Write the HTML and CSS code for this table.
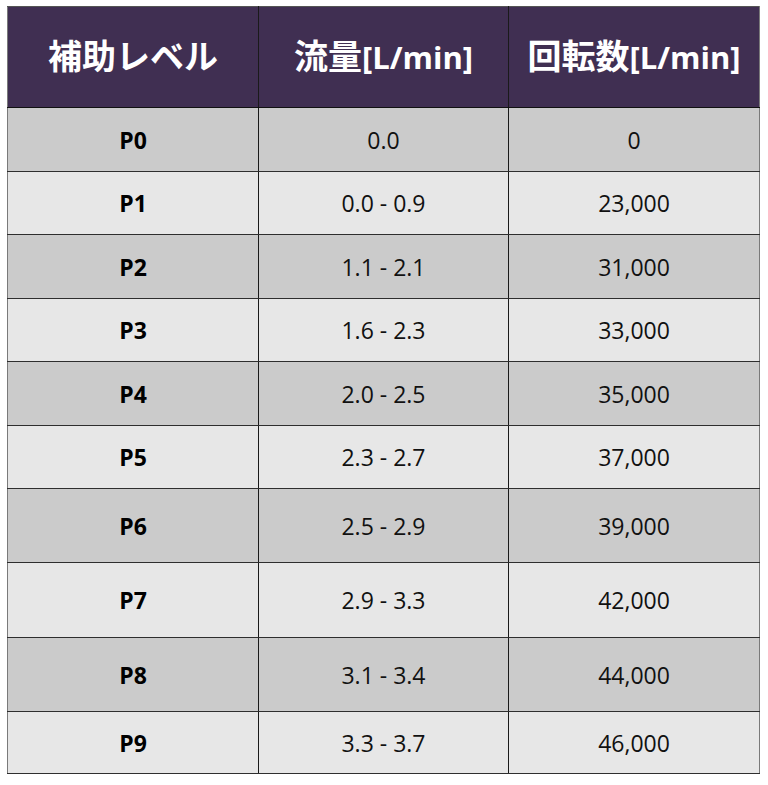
FILE: index.html
```html
<!DOCTYPE html>
<html lang="ja">
<head>
<meta charset="utf-8">
<link rel="stylesheet" href="styles.css">
</head>
<body>
<table class="spec">
  <colgroup><col class="c1"><col class="c2"><col class="c3"></colgroup>
  <thead>
    <tr class="head"><th><span class="jp">補助レベル</span></th><th><span class="jp">流量</span>[L/min]</th><th><span class="jp">回転数</span>[L/min]</th></tr>
  </thead>
  <tbody>
    <tr class="dark r64"><td class="lv">P0</td><td>0.0</td><td>0</td></tr>
    <tr class="light r63"><td class="lv">P1</td><td>0.0 - 0.9</td><td>23,000</td></tr>
    <tr class="dark r64"><td class="lv">P2</td><td>1.1 - 2.1</td><td>31,000</td></tr>
    <tr class="light r63"><td class="lv">P3</td><td>1.6 - 2.3</td><td>33,000</td></tr>
    <tr class="dark r64"><td class="lv">P4</td><td>2.0 - 2.5</td><td>35,000</td></tr>
    <tr class="light r63"><td class="lv">P5</td><td>2.3 - 2.7</td><td>37,000</td></tr>
    <tr class="dark r74"><td class="lv">P6</td><td>2.5 - 2.9</td><td>39,000</td></tr>
    <tr class="light r75"><td class="lv">P7</td><td>2.9 - 3.3</td><td>42,000</td></tr>
    <tr class="dark r74"><td class="lv">P8</td><td>3.1 - 3.4</td><td>44,000</td></tr>
    <tr class="light r62"><td class="lv">P9</td><td>3.3 - 3.7</td><td>46,000</td></tr>
  </tbody>
</table>
</body>
</html>
```
FILE: styles.css
```css
html, body { background: #ffffff; }
body {
  margin: 6px 0 0 7px;
  font-family: "Open Sans", "Noto Sans CJK JP", sans-serif;
}
.spec {
  border-collapse: collapse;
  table-layout: fixed;
  width: 752px;
  border: 1px solid #7a7a7a;
}
.c1 { width: 251px; }
.c2 { width: 250px; }
.c3 { width: 251px; }
.spec th, .spec td {
  padding: 0;
  text-align: center;
  vertical-align: middle;
  border-left: 1px solid #1a1a1a;
  border-right: 1px solid #1a1a1a;
  border-bottom: 1px solid #2e2e2e;
}
.spec th:first-child, .spec td:first-child { border-left-color: #7a7a7a; }
.spec th:last-child, .spec td:last-child { border-right-color: #7a7a7a; }
.head { height: 101px; background: #402f52; }
.head th {
  color: #ffffff;
  font-family: "Open Sans", "Noto Sans CJK JP", sans-serif;
  font-weight: 700;
  font-size: 31px;
  line-height: 1;
  padding-bottom: 3px;
  border-top: 1px solid #555;
  border-bottom-color: #111;
}
.head .jp {
  font-family: "Noto Sans CJK JP", sans-serif;
  font-size: 34px;
}
.spec td {
  font-size: 23px;
  color: #111;
}
.spec td.lv { font-weight: 700; color: #000; }
.dark { background: #cbcbcb; }
.light { background: #e7e7e7; }
.r62 { height: 62px; }
.r63 { height: 63px; }
.r64 { height: 64px; }
.r74 { height: 74px; }
.r75 { height: 75px; }
```
